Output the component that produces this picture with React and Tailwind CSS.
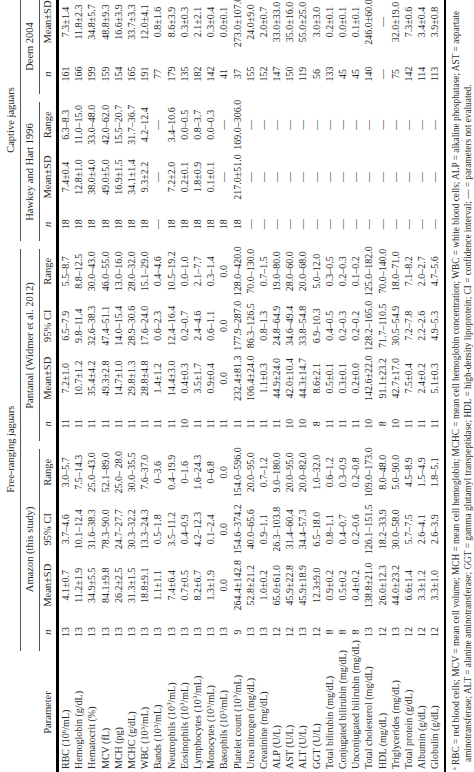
import React from 'react';

// table columns: Parameter | Amazon n, mean, ci, range | Pantanal n, mean, ci, range | Hawkey n, mean, range | Deem n, mean
const rows = [
  ['RBC (10|6|/mL)', '13', '4.1±0.7', '3.7–4.6', '3.0–5.7', '11', '7.2±1.0', '6.5–7.9', '5.5–8.7', '18', '7.4±0.4', '6.3–8.3', '161', '7.3±1.4'],
  ['Hemoglobin (g/dL)', '13', '11.2±1.9', '10.1–12.4', '7.5–14.3', '11', '10.7±1.2', '9.8–11.4', '8.8–12.5', '18', '12.8±1.0', '11.0–15.0', '166', '11.8±2.3'],
  ['Hematocrit (%)', '13', '34.9±5.5', '31.6–38.3', '25.0–43.0', '11', '35.4±4.2', '32.6–38.3', '30.0–43.0', '18', '38.0±4.0', '33.0–48.0', '199', '34.8±5.7'],
  ['MCV (fL)', '13', '84.1±9.8', '78.3–90.0', '52.1–89.0', '11', '49.3±2.8', '47.4–51.1', '46.0–55.0', '18', '49.0±5.0', '42.0–62.0', '159', '48.8±9.3'],
  ['MCH (pg)', '13', '26.2±2.5', '24.7–27.7', '25.0– 28.0', '11', '14.7±1.0', '14.0–15.4', '13.0–16.0', '18', '16.9±1.5', '15.5–20.7', '154', '16.6±3.9'],
  ['MCHC (g/dL)', '13', '31.3±1.5', '30.3–32.2', '30.0–35.5', '11', '29.8±1.3', '28.9–30.6', '28.0–32.0', '18', '34.1±1.4', '31.7–36.7', '165', '33.7±3.3'],
  ['WBC (10|3|/mL)', '13', '18.8±9.1', '13.3–24.3', '7.6–37.0', '11', '28.8±4.8', '17.6–24.0', '15.1–29.0', '18', '9.3±2.2', '4.2–12.4', '191', '12.0±4.1'],
  ['Bands (10|3|/mL)', '13', '1.1±1.1', '0.5–1.8', '0–3.6', '11', '1.4±1.2', '0.6–2.3', '0.4–4.6', '—', '—', '—', '77', '0.8±1.6'],
  ['Neutrophils (10|3|/mL)', '13', '7.4±6.4', '3.5–11.2', '0.4–19.9', '11', '14.4±3.0', '12.4–16.4', '10.5–19.2', '18', '7.2±2.0', '3.4–10.6', '179', '8.6±3.9'],
  ['Eosinophils (10|3|/mL)', '13', '0.7±0.5', '0.4–0.9', '0–1.6', '10', '0.4±0.3', '0.2–0.7', '0.0–1.0', '18', '0.2±0.1', '0.0–0.5', '135', '0.3±0.3'],
  ['Lymphocytes (10|3|/mL)', '13', '8.2±6.7', '4.2–12.3', '1.6–24.3', '11', '3.5±1.7', '2.4–4.6', '2.1–7.7', '18', '1.8±0.9', '0.8–3.7', '182', '2.1±2.1'],
  ['Monocytes (10|3|/mL)', '13', '1.3±1.9', '0.1–2.4', '0–6.8', '11', '0.9±0.4', '0.6–1.1', '0.3–1.4', '18', '0.1±0.1', '0.0–0.3', '142', '0.3±0.4'],
  ['Basophils (10|3|/mL)', '13', '0.0', '0.0', '0.0', '11', '0.0', '0.0', '0.0', '18', '—', '—', '41', '0.0±0.1'],
  ['Platelet count (10|3|/mL)', '9', '264.4±142.8', '154.6–374.2', '154.0–596.0', '11', '232.4±81.3', '177.9–287.0', '128.0–420.0', '18', '217.0±51.0', '169.0–306.0', '37', '273.0±107.0'],
  ['Urea nitrogen (mg/dL)', '13', '52.8±21.2', '40.0–65.6', '20.0–95.0', '11', '106.4±24.0', '86.3–126.5', '70.0–130.0', '—', '—', '—', '155', '24.0±9.0'],
  ['Creatinine (mg/dL)', '13', '1.0±0.2', '0.9–1.1', '0.7–1.2', '11', '1.1±0.3', '0.8–1.3', '0.7–1.5', '—', '—', '—', '152', '2.0±0.7'],
  ['ALP (U/L)', '12', '65.0±61.0', '26.3–103.8', '9.0–180.0', '11', '44.9±24.0', '24.8–64.9', '19.0–80.0', '—', '—', '—', '147', '33.0±33.0'],
  ['AST (U/L)', '12', '45.9±22.8', '31.4–60.4', '20.0–95.0', '10', '42.0±10.4', '34.6–49.4', '28.0–60.0', '—', '—', '—', '150', '35.0±16.0'],
  ['ALT (U/L)', '13', '45.9±18.9', '34.4–57.3', '20.0–82.0', '10', '44.3±14.7', '33.8–54.8', '20.0–68.0', '—', '—', '—', '119', '55.0±25.0'],
  ['GGT (U/L)', '12', '12.3±9.0', '6.5–18.0', '1.0–32.0', '8', '8.6±2.1', '6.9–10.3', '5.0–12.0', '—', '—', '—', '56', '3.0±3.0'],
  ['Total bilirubin (mg/dL)', '8', '0.9±0.2', '0.8–1.1', '0.6–1.2', '11', '0.5±0.1', '0.4–0.5', '0.3–0.5', '—', '—', '—', '133', '0.2±0.1'],
  ['Conjugated bilirubin (mg/dL)', '8', '0.5±0.2', '0.4–0.7', '0.3–0.9', '11', '0.3±0.1', '0.2–0.3', '0.2–0.3', '—', '—', '—', '45', '0.0±0.1'],
  ['Unconjugated bilirubin (mg/dL)', '8', '0.4±0.2', '0.2–0.6', '0.2–0.8', '11', '0.2±0.0', '0.2–0.2', '0.1–0.2', '—', '—', '—', '45', '0.1±0.1'],
  ['Total cholesterol (mg/dL)', '13', '138.8±21.0', '126.1–151.5', '109.0–173.0', '10', '142.6±22.0', '128.2–165.0', '125.0–182.0', '—', '—', '—', '140', '246.0±60.0'],
  ['HDL (mg/dL)', '12', '26.0±12.3', '18.2–33.9', '8.0–48.0', '8', '91.1±23.2', '71.7–110.5', '70.0–140.0', '—', '—', '—', '—', '—'],
  ['Triglycerides (mg/dL)', '13', '44.0±23.2', '30.0–58.0', '5.0–90.0', '10', '42.7±17.0', '30.5–54.9', '18.0–71.0', '—', '—', '—', '75', '32.0±19.0'],
  ['Total protein (g/dL)', '12', '6.6±1.4', '5.7–7.5', '4.5–8.9', '11', '7.5±0.4', '7.2–7.8', '7.1–8.2', '—', '—', '—', '142', '7.3±0.6'],
  ['Albumin (g/dL)', '12', '3.3±1.2', '2.6–4.1', '1.5–4.9', '11', '2.4±0.2', '2.2–2.6', '2.0–2.7', '—', '—', '—', '114', '3.4±0.4'],
  ['Globulin (g/dL)', '12', '3.3±1.0', '2.6–3.9', '1.8–5.1', '11', '5.1±0.3', '4.9–5.3', '4.7–5.6', '—', '—', '—', '113', '3.9±0.8'],
];

const colHeads = ['n', 'Mean±SD', '95% CI', 'Range', 'n', 'Mean±SD', '95% CI', 'Range', 'n', 'Mean±SD', 'Range', 'n', 'Mean±SD'];

const grid = 'grid grid-cols-[119px_42px_51.5px_60.5px_53.5px_43.5px_47.5px_57.5px_51.5px_42.5px_52px_52.5px_49px_55px]';

const Param = ({ text }) => {
  const [pre, sup, post] = text.split('|');
  return (
    <span>
      {pre}
      {sup && <sup className="text-[7px]">{sup}</sup>}
      {post}
    </span>
  );
};

const Cell = ({ children }) => (
  <div className="flex justify-center items-center whitespace-nowrap">{children}</div>
);

const App = () => {
  return (
    <div className="w-[474px] h-[772px] overflow-hidden bg-white">
      <div className="w-[772px] h-[474px] origin-top-left [transform:translateY(772px)_rotate(-90deg)] font-['Liberation_Serif',serif] text-[#2b2b2b] text-[10px] leading-none">
        {/* spanner: free-ranging / captive */}
        <div className={`${grid} h-[20px] items-center pt-[2px]`}>
          <div />
          <div className="col-span-8 flex justify-center text-[10.5px]">Free-ranging jaguars</div>
          <div className="col-span-5 flex justify-center text-[10.5px]">Captive jaguars</div>
        </div>
        <div className={`${grid} h-px`}>
          <div />
          <div className="col-span-8 bg-[#555] ml-[2px] mr-[4px]" />
          <div className="col-span-5 bg-[#555] ml-[4px]" />
        </div>
        {/* study groups */}
        <div className={`${grid} h-[18px] items-center`}>
          <div />
          <div className="col-span-4 flex justify-center text-[10.5px]">Amazon (this study)</div>
          <div className="col-span-4 flex justify-center text-[10.5px]">Pantanal (Widmer et al. 2012)</div>
          <div className="col-span-3 flex justify-center text-[10.5px]">Hawkey and Hart 1996</div>
          <div className="col-span-2 flex justify-center text-[10.5px]">Deem 2004</div>
        </div>
        <div className={`${grid} h-px`}>
          <div />
          <div className="col-span-4 bg-[#555] ml-[2px] mr-[4px]" />
          <div className="col-span-4 bg-[#555] mx-[4px]" />
          <div className="col-span-3 bg-[#555] mx-[4px]" />
          <div className="col-span-2 bg-[#555] ml-[4px]" />
        </div>
        {/* column heads */}
        <div className={`${grid} h-[16px] items-center text-[10.5px]`}>
          <div className="flex justify-center">Parameter</div>
          {colHeads.map((h, i) => (
            <Cell key={i}>{h === 'n' ? <i>n</i> : h}</Cell>
          ))}
        </div>
        <div className="h-[2.5px] bg-black" />
        {/* data */}
        <div className="pt-[1px]">
          {rows.map((r, i) => (
            <div key={i} className={`${grid} h-[13.2px] items-center`}>
              <div className="pl-[3px] whitespace-nowrap"><Param text={r[0]} /></div>
              {r.slice(1).map((v, j) => (
                <Cell key={j}>{v}</Cell>
              ))}
            </div>
          ))}
        </div>
        <div className="h-[2.5px] bg-black mt-[2px]" />
        {/* footnote */}
        <div className="pt-[4px] text-[9.3px] leading-[12px] whitespace-nowrap">
          <div className="pl-[2px]">
            <sup className="text-[6px]">a</sup> RBC = red blood cells; MCV = mean cell volume; MCH = mean cell hemoglobin; MCHC = mean cell hemoglobin concentration; WBC = white blood cells; ALP = alkaline phosphatase; AST = aspartate
          </div>
          <div className="pl-[10px]">
            aminotransferase; ALT = alanine aminotransferase; GGT = gamma glutamyl transpeptidase; HDL = high-density lipoprotein; CI = confidence interval; — = parameters not evaluated.
          </div>
        </div>
      </div>
    </div>
  );
};

export default App;
